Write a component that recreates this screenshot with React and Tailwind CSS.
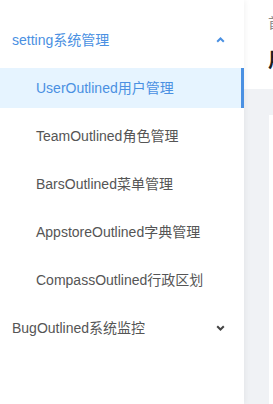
export default function App() {
  const font = { fontFamily: '"Liberation Sans", "Noto Sans CJK SC", sans-serif' };
  const items = [
    "UserOutlined用户管理",
    "TeamOutlined角色管理",
    "BarsOutlined菜单管理",
    "AppstoreOutlined字典管理",
    "CompassOutlined行政区划",
  ];
  return (
    <div className="flex h-screen w-[273px] overflow-hidden bg-[#f0f2f5]" style={font}>
      <div className="relative z-10 flex h-full w-[244px] shrink-0 flex-col gap-2 bg-white pt-[20px] text-[14px] shadow-[1px_0_6px_rgba(0,0,0,0.06)]">
        <div className="flex h-10 items-center justify-between pl-[12px] pr-[19px] text-[#4a90e2]">
          <span>setting系统管理</span>
          <svg width="9" height="6" viewBox="0 0 9 6">
            <path d="M1.2 4.8 L4.5 1.5 L7.8 4.8" fill="none" stroke="#4a90e2" strokeWidth="2" />
          </svg>
        </div>
        {items.map((t, i) => (
          <div
            key={t}
            className={
              i === 0
                ? "flex h-10 items-center border-r-[3px] border-[#4a90e2] bg-[#e6f4ff] pl-[36px] text-[#4a90e2]"
                : "flex h-10 items-center pl-[36px] text-[#555555]"
            }
          >
            {t}
          </div>
        ))}
        <div className="flex h-10 items-center justify-between pl-[12px] pr-[19px] text-[#555555]">
          <span>BugOutlined系统监控</span>
          <svg width="9" height="6" viewBox="0 0 9 6">
            <path d="M1.2 1.2 L4.5 4.5 L7.8 1.2" fill="none" stroke="#444444" strokeWidth="2" />
          </svg>
        </div>
      </div>
      <div className="flex min-w-[400px] flex-col">
        <div className="h-[89px] shrink-0 bg-white pl-[24px] pt-[12px]">
          <div className="text-[14px] leading-[22px] text-[#8c8c8c]">首页 / 系统管理 / 用户管理</div>
          <div className="mt-[12px] text-[20px] font-bold leading-[28px] text-[#1f1f1f]">用户管理</div>
        </div>
        <div className="pl-[25px] pt-[26px]">
          <div className="h-[300px] w-[300px] bg-white" />
        </div>
      </div>
    </div>
  );
}
